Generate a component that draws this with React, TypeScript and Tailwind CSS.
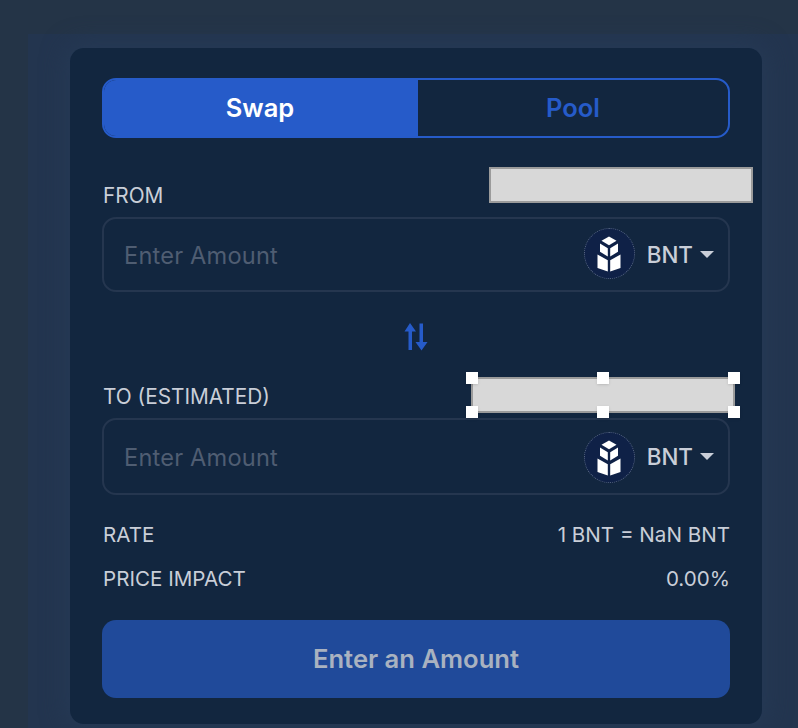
import { Fragment } from "react";

const BancorLogo = ({ className }: { className: string }) => (
  <div className={`flex h-[51px] w-[51px] items-center justify-center rounded-full border border-dotted border-[#5b6a85] bg-[#0f2147] ${className}`}>
    <svg width="24" height="36" viewBox="0 0 24 36" fill="#ffffff">
      <path d="M12 0.5 L19.5 4.8 L12 9.2 L4.5 4.8 Z" />
      <path d="M3 7.5 L10.8 12.2 L10.8 20.5 L3 15.8 Z" />
      <path d="M21 7.5 L13.2 12.2 L13.2 20.5 L21 15.8 Z" />
      <path d="M0.5 18.5 L10.8 24.3 L10.8 35.5 L0.5 32 Z" />
      <path d="M23.5 18.5 L13.2 24.3 L13.2 35.5 L23.5 32 Z" />
    </svg>
  </div>
);

const TokenInput = ({ height, logoClass }: { height: string; logoClass: string }) => (
  <div className={`flex items-center justify-between rounded-[14px] border-2 border-[#25364f] pl-5 pr-[14px] ${height}`}>
    <span className="pt-[2px] text-[23.6px] tracking-[0.2px] text-[#4f5d72]">Enter Amount</span>
    <div className="flex items-center gap-[12px]">
      <BancorLogo className={logoClass} />
      <div className="flex items-center gap-[7px]">
        <span className="text-[22.4px] font-medium text-[#c9ced8]">BNT</span>
        <div className="h-0 w-0 border-x-[7px] border-t-[7px] border-x-transparent border-t-[#c9ced8]" />
      </div>
    </div>
  </div>
);

const Placeholder = ({ className, selected }: { className: string; selected?: boolean }) => (
  <div className={`absolute h-[36px] w-[264px] border-2 border-[#9b9b9b] bg-[#d8d8d8] ${className}`}>
    {selected && (
      <Fragment>
        <div className="absolute left-[-7px] top-[-7px] h-3 w-3 bg-white shadow" />
        <div className="absolute left-[124px] top-[-7px] h-3 w-3 bg-white shadow" />
        <div className="absolute right-[-7px] top-[-7px] h-3 w-3 bg-white shadow" />
        <div className="absolute bottom-[-7px] left-[-7px] h-3 w-3 bg-white shadow" />
        <div className="absolute bottom-[-7px] left-[124px] h-3 w-3 bg-white shadow" />
        <div className="absolute bottom-[-7px] right-[-7px] h-3 w-3 bg-white shadow" />
      </Fragment>
    )}
  </div>
);

export default function App() {
  return (
    <div className="h-[728px] w-[798px] overflow-hidden bg-[#243447] pl-[28px] pt-[34px] font-['Inter',sans-serif]">
      <div className="h-[694px] w-[770px] bg-[#23354f] pl-[42px] pt-[14px]">
        <div className="relative h-[676px] w-[692px] rounded-[14px] bg-[#12263f] px-8 pt-[30px] shadow-[0_0_24px_4px_#263a56]">
          <div className="flex h-[60px] overflow-hidden rounded-[14px] border-2 border-[#265bc9]">
            <div className="flex w-[314px] items-center justify-center bg-[#265bc9] pr-[2px] text-[25.5px] font-semibold text-white">Swap</div>
            <div className="flex flex-1 items-center justify-center text-[25.5px] font-semibold text-[#265bc9]">Pool</div>
          </div>

          <div className="mt-[46px] h-[23px] pl-px text-[20.8px] leading-[23px] text-[#c9ced8]">FROM</div>
          <div className="mt-[10px]">
            <TokenInput height="h-[75px]" logoClass="-mt-[2px]" />
          </div>

          <div className="mt-[31px] flex justify-center">
            <svg width="24" height="28" viewBox="0 0 24 28" fill="#265bc9">
              <path d="M6 0 L12 8.5 L8 8.5 L8 27 L4.5 27 L4.5 8.5 L0.5 8.5 Z" />
              <path d="M15.5 0.5 L19 0.5 L19 19 L23.5 19 L17.5 27.5 L11.5 19 L15.5 19 Z" />
            </svg>
          </div>

          <div className="mt-[34px] h-[23px] pl-px text-[20.8px] leading-[23px] text-[#c9ced8]">TO (ESTIMATED)</div>
          <div className="mt-[10px]">
            <TokenInput height="h-[77px]" logoClass="mt-[2px]" />
          </div>

          <div className="mt-[28px] flex h-[24px] items-center justify-between pl-px text-[20.6px] text-[#c9ced8]">
            <span>RATE</span>
            <span>1 BNT = NaN BNT</span>
          </div>
          <div className="mt-[20px] flex h-[24px] items-center justify-between pl-px text-[20.6px] text-[#c9ced8]">
            <span>PRICE IMPACT</span>
            <span>0.00%</span>
          </div>

          <div className="mt-[29px] flex h-[78px] items-center justify-center rounded-[14px] bg-[#204a9a] text-[25.6px] font-semibold text-[#a9b2c0]">
            Enter an Amount
          </div>

          <Placeholder className="left-[419px] top-[119px]" />
          <Placeholder className="left-[401px] top-[329px]" selected />
        </div>
      </div>
    </div>
  );
}
